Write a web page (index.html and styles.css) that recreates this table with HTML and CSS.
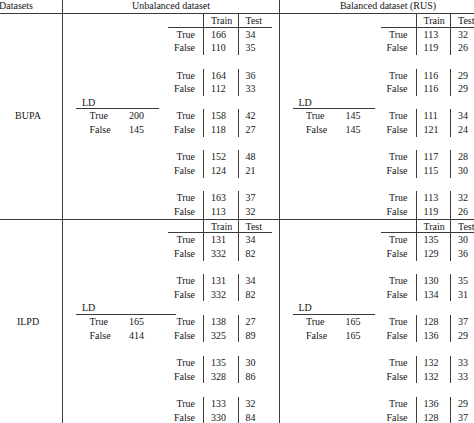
FILE: index.html
```html
<!DOCTYPE html>
<html>
<head>
<meta charset="utf-8">
<link rel="stylesheet" href="styles.css">
</head>
<body>
<div class="table">
  <div class="row head">
    <div class="ds">Datasets</div>
    <div class="sec">Unbalanced dataset</div>
    <div class="sec">Balanced dataset (RUS)</div>
  </div>

  <div class="row group">
    <div class="ds name">BUPA</div>
    <div class="sec body-u">
      <div class="ld">
        <div class="ld-h">LD</div>
        <div class="k">True</div><div class="v">200</div>
        <div class="k">False</div><div class="v">145</div>
      </div>
      <div class="stack">
        <div class="mt">
          <div class="l h"></div><div class="n h">Train</div><div class="n h">Test</div>
          <div class="l">True</div><div class="n">166</div><div class="n">34</div>
          <div class="l">False</div><div class="n">110</div><div class="n">35</div>
        </div>
        <div class="mt">
          <div class="l">True</div><div class="n">164</div><div class="n">36</div>
          <div class="l">False</div><div class="n">112</div><div class="n">33</div>
        </div>
        <div class="mt">
          <div class="l">True</div><div class="n">158</div><div class="n">42</div>
          <div class="l">False</div><div class="n">118</div><div class="n">27</div>
        </div>
        <div class="mt">
          <div class="l">True</div><div class="n">152</div><div class="n">48</div>
          <div class="l">False</div><div class="n">124</div><div class="n">21</div>
        </div>
        <div class="mt">
          <div class="l">True</div><div class="n">163</div><div class="n">37</div>
          <div class="l">False</div><div class="n">113</div><div class="n">32</div>
        </div>
      </div>
    </div>
    <div class="sec body-b">
      <div class="ld">
        <div class="ld-h">LD</div>
        <div class="k">True</div><div class="v">145</div>
        <div class="k">False</div><div class="v">145</div>
      </div>
      <div class="stack">
        <div class="mt">
          <div class="l h"></div><div class="n h">Train</div><div class="n h">Test</div>
          <div class="l">True</div><div class="n">113</div><div class="n">32</div>
          <div class="l">False</div><div class="n">119</div><div class="n">26</div>
        </div>
        <div class="mt">
          <div class="l">True</div><div class="n">116</div><div class="n">29</div>
          <div class="l">False</div><div class="n">116</div><div class="n">29</div>
        </div>
        <div class="mt">
          <div class="l">True</div><div class="n">111</div><div class="n">34</div>
          <div class="l">False</div><div class="n">121</div><div class="n">24</div>
        </div>
        <div class="mt">
          <div class="l">True</div><div class="n">117</div><div class="n">28</div>
          <div class="l">False</div><div class="n">115</div><div class="n">30</div>
        </div>
        <div class="mt">
          <div class="l">True</div><div class="n">113</div><div class="n">32</div>
          <div class="l">False</div><div class="n">119</div><div class="n">26</div>
        </div>
      </div>
    </div>
  </div>

  <div class="row group">
    <div class="ds name">ILPD</div>
    <div class="sec body-u">
      <div class="ld wide">
        <div class="ld-h">LD</div>
        <div class="k">True</div><div class="v">165</div>
        <div class="k">False</div><div class="v">414</div>
      </div>
      <div class="stack">
        <div class="mt">
          <div class="l h"></div><div class="n h">Train</div><div class="n h">Test</div>
          <div class="l">True</div><div class="n">131</div><div class="n">34</div>
          <div class="l">False</div><div class="n">332</div><div class="n">82</div>
        </div>
        <div class="mt">
          <div class="l">True</div><div class="n">131</div><div class="n">34</div>
          <div class="l">False</div><div class="n">332</div><div class="n">82</div>
        </div>
        <div class="mt">
          <div class="l">True</div><div class="n">138</div><div class="n">27</div>
          <div class="l">False</div><div class="n">325</div><div class="n">89</div>
        </div>
        <div class="mt">
          <div class="l">True</div><div class="n">135</div><div class="n">30</div>
          <div class="l">False</div><div class="n">328</div><div class="n">86</div>
        </div>
        <div class="mt">
          <div class="l">True</div><div class="n">133</div><div class="n">32</div>
          <div class="l">False</div><div class="n">330</div><div class="n">84</div>
        </div>
      </div>
    </div>
    <div class="sec body-b">
      <div class="ld">
        <div class="ld-h">LD</div>
        <div class="k">True</div><div class="v">165</div>
        <div class="k">False</div><div class="v">165</div>
      </div>
      <div class="stack">
        <div class="mt">
          <div class="l h"></div><div class="n h">Train</div><div class="n h">Test</div>
          <div class="l">True</div><div class="n">135</div><div class="n">30</div>
          <div class="l">False</div><div class="n">129</div><div class="n">36</div>
        </div>
        <div class="mt">
          <div class="l">True</div><div class="n">130</div><div class="n">35</div>
          <div class="l">False</div><div class="n">134</div><div class="n">31</div>
        </div>
        <div class="mt">
          <div class="l">True</div><div class="n">128</div><div class="n">37</div>
          <div class="l">False</div><div class="n">136</div><div class="n">29</div>
        </div>
        <div class="mt">
          <div class="l">True</div><div class="n">132</div><div class="n">33</div>
          <div class="l">False</div><div class="n">132</div><div class="n">33</div>
        </div>
        <div class="mt">
          <div class="l">True</div><div class="n">136</div><div class="n">29</div>
          <div class="l">False</div><div class="n">128</div><div class="n">37</div>
        </div>
      </div>
    </div>
  </div>
</div>
</body>
</html>
```
FILE: styles.css
```css
* { box-sizing: border-box; }
html, body {
  margin: 0;
  padding: 0;
  background: #fff;
  overflow: hidden;
}
body {
  font-family: "Liberation Serif", "Times New Roman", serif;
  font-size: 10px;
  color: #161616;
  --rh: 13.65px;
  --line: #3a3a3a;
}
.table {
  width: 503px;
  margin-left: -6px;
}
.row {
  display: flex;
}
.ds {
  width: 69px;
  flex: none;
  border-right: 1px solid var(--line);
}
.sec {
  width: 217px;
  flex: none;
  border-right: 1px solid var(--line);
}
.head {
  height: 14px;
  border-bottom: 1px solid var(--line);
  line-height: 11px;
}
.head .ds {
  padding-left: 5px;
}
.head .sec {
  text-align: center;
}
.group {
  border-bottom: 1px solid var(--line);
}
.name {
  display: flex;
  align-items: center;
  justify-content: center;
  line-height: var(--rh);
}
.body-u, .body-b {
  display: grid;
  align-items: center;
}
.body-u {
  grid-template-columns: 92px 104px;
  padding-left: 13px;
}
.body-b {
  grid-template-columns: 88px 104px;
  padding-left: 12.5px;
}
.ld {
  width: 82.5px;
  display: grid;
  grid-template-columns: 53px 1fr;
  grid-auto-rows: var(--rh);
  line-height: var(--rh);
}
.ld.wide {
  width: 99.5px;
}
.ld-h {
  grid-column: 1 / -1;
  padding-left: 6px;
  border-bottom: 1px solid var(--line);
}
.ld .k {
  padding-left: 13.5px;
}
.stack {
  display: flex;
  flex-direction: column;
  gap: var(--rh);
}
.mt {
  display: grid;
  grid-template-columns: 35px 34.5px 34.5px;
  grid-auto-rows: var(--rh);
  line-height: var(--rh);
}
.mt .l {
  text-align: right;
  padding-right: 8px;
}
.mt .n {
  border-left: 1px solid var(--line);
  padding-left: 7px;
}
.mt .h {
  border-bottom: 1px solid var(--line);
}
```
